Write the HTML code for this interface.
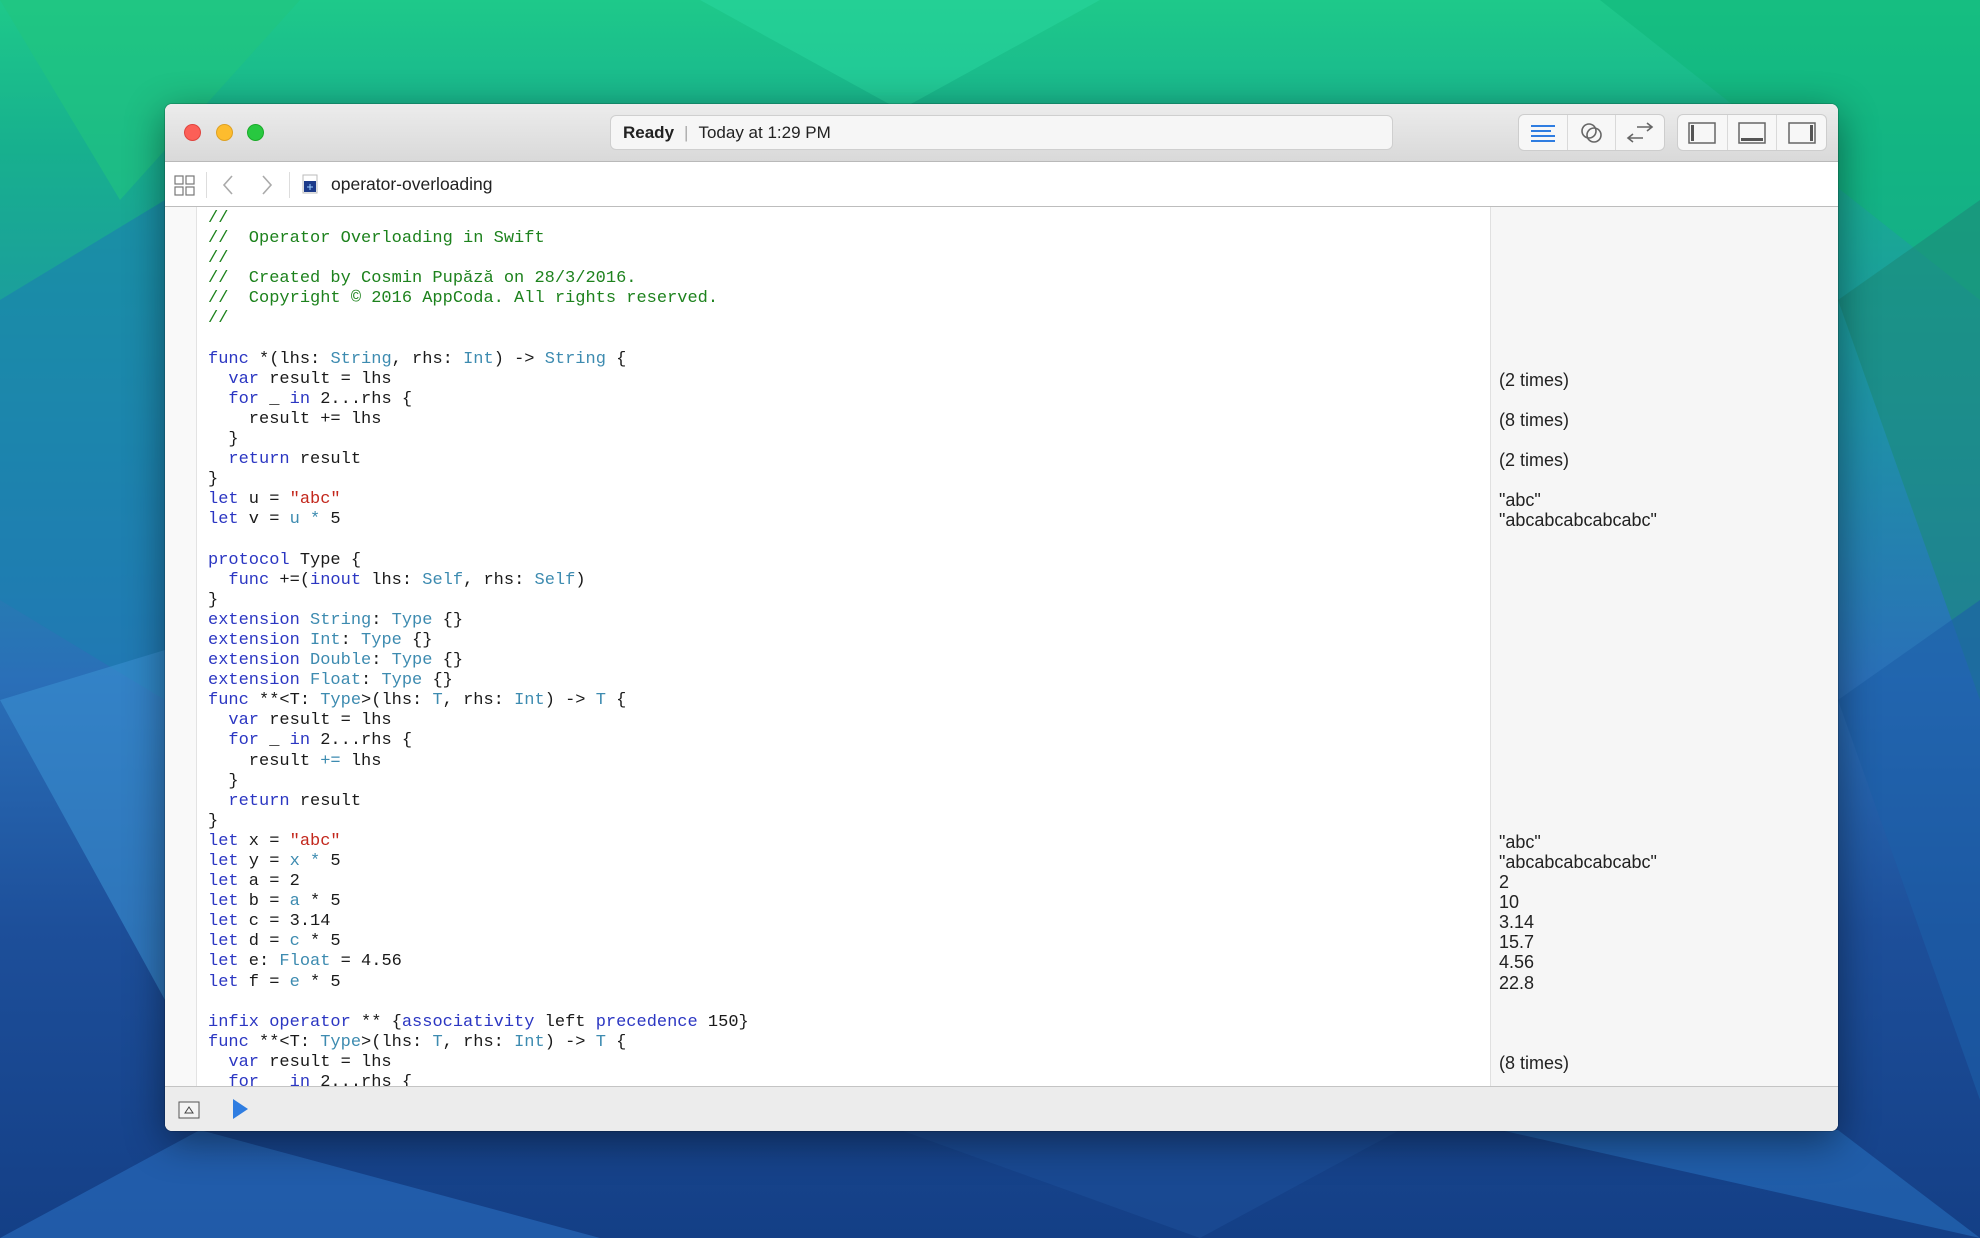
<!DOCTYPE html>
<html><head><meta charset="utf-8"><style>
*{margin:0;padding:0;box-sizing:border-box}
body{width:1980px;height:1238px;overflow:hidden;position:relative;font-family:"Liberation Sans",sans-serif;background:linear-gradient(180deg,#1ec98a 0%,#17b08e 12%,#1f8fa8 35%,#2a6fb8 55%,#1d4f9a 75%,#143f86 100%)}
.bg{position:absolute;left:0;top:0}
.win{position:absolute;left:165px;top:104px;width:1673px;height:1027px;border-radius:7px;overflow:hidden;background:#fff;box-shadow:0 10px 40px rgba(0,0,0,.45),0 0 0 1px rgba(0,0,0,.15)}
.title{position:absolute;left:0;top:0;width:100%;height:58px;background:linear-gradient(#ececec,#d9d9d9);border-bottom:1px solid #b9b9b9}
.dot{position:absolute;top:20px;width:17px;height:17px;border-radius:50%}
.status{position:absolute;left:446px;top:12px;width:781px;height:33px;background:#f6f6f6;border-radius:5px;box-shadow:0 0 0 1px #cfcfcf;font-size:17px;line-height:33px;color:#222}
.grp{position:absolute;top:11px;height:35px;background:#f7f7f7;border-radius:5px;box-shadow:0 0 0 1px #cdcdcd;display:flex}
.grp div{flex:1;border-right:1px solid #d9d9d9;display:flex;align-items:center;justify-content:center}
.grp div:last-child{border-right:none}
.nav{position:absolute;left:0;top:58px;width:100%;height:45px;background:#fff;border-bottom:1px solid #bdbdbd}
.code{position:absolute;left:0;top:103px;width:100%;height:879px;overflow:hidden;background:#fff}
.gut{position:absolute;left:0;top:0;width:32px;height:100%;background:#f9f9f9;border-right:1px solid #e3e3e3}
.res{position:absolute;left:1325px;top:0;right:0;height:100%;background:#f6f6f6;border-left:1px solid #e0e0e0}
pre{position:absolute;left:43px;top:2px;font-family:"Liberation Mono",monospace;font-size:17px;line-height:20.1px;color:#1a1a1a}
.r{position:absolute;left:1334px;top:2px;font-size:18px;line-height:20.1px;color:#222;white-space:pre}
.c{color:#1d821d}.k{color:#2b36c2}.t{color:#3d8bb0}.s{color:#c3281d}
.bot{position:absolute;left:0;top:982px;width:100%;height:45px;background:#ececec;border-top:1px solid #c4c4c4}
</style></head><body>
<svg class="bg" width="1980" height="1238">
<polygon points="0,0 300,0 120,200" fill="#22c47e" opacity=".6"/>
<polygon points="700,0 1100,0 900,110" fill="#2ad8a0" opacity=".5"/>
<polygon points="1600,0 1980,0 1980,300" fill="#10b87c" opacity=".6"/>
<polygon points="0,300 165,200 165,700 0,600" fill="#1a7fb0" opacity=".6"/>
<polygon points="0,700 165,650 165,1000" fill="#3a8fd0" opacity=".6"/>
<polygon points="1838,300 1980,200 1980,700" fill="#1a8a7a" opacity=".6"/>
<polygon points="1838,700 1980,600 1980,1100" fill="#1d5fa8" opacity=".6"/>
<polygon points="200,1130 600,1238 0,1238" fill="#2a6ec0" opacity=".6"/>
<polygon points="900,1130 1400,1130 1200,1238" fill="#1c4f98" opacity=".6"/>
<polygon points="1500,1130 1980,1238 1838,1130" fill="#2a78c8" opacity=".5"/>
</svg>
<div class="win">
 <div class="title">
  <div class="dot" style="left:19px;background:#fc5f57;border:1px solid #e0443e"></div>
  <div class="dot" style="left:51px;background:#fdbc2e;border:1px solid #dea123"></div>
  <div class="dot" style="left:82px;background:#28c840;border:1px solid #1aab29"></div>
  <div class="status"><b style="margin-left:12px">Ready</b><span style="color:#aaa;margin:0 10px">|</span>Today at 1:29 PM</div>
  <div class="grp" style="left:1354px;width:145px">
   <div><svg width="28" height="20"><g stroke="#2f7de1" stroke-width="2"><line x1="2" y1="3" x2="26" y2="3"/><line x1="2" y1="8" x2="22" y2="8"/><line x1="2" y1="13" x2="26" y2="13"/><line x1="2" y1="18" x2="26" y2="18"/></g></svg></div>
   <div><svg width="26" height="24"><g fill="none" stroke="#666" stroke-width="1.6"><circle cx="10" cy="10" r="7"/><circle cx="15" cy="14" r="7"/></g></svg></div>
   <div><svg width="30" height="24"><g fill="none" stroke="#666" stroke-width="1.6"><path d="M12 6H27M22 2l5 4-5 4"/><path d="M3 17H18M8 13l-5 4 5 4"/></g></svg></div>
  </div>
  <div class="grp" style="left:1513px;width:148px">
   <div><svg width="28" height="22"><rect x="1" y="1" width="26" height="20" fill="none" stroke="#666" stroke-width="1.5"/><rect x="3" y="3" width="3" height="16" fill="#555"/></svg></div>
   <div><svg width="28" height="22"><rect x="1" y="1" width="26" height="20" fill="none" stroke="#666" stroke-width="1.5"/><rect x="3" y="16" width="22" height="3" fill="#555"/></svg></div>
   <div><svg width="28" height="22"><rect x="1" y="1" width="26" height="20" fill="none" stroke="#666" stroke-width="1.5"/><rect x="22" y="3" width="3" height="16" fill="#555"/></svg></div>
  </div>
 </div>
 <div class="nav">
  <svg style="position:absolute;left:9px;top:13px" width="22" height="22"><g fill="none" stroke="#777" stroke-width="1.2"><rect x="1" y="1" width="8" height="8"/><rect x="12" y="1" width="8" height="8"/><rect x="1" y="12" width="8" height="8"/><rect x="12" y="12" width="8" height="8"/></g></svg>
  <div style="position:absolute;left:41px;top:10px;width:1px;height:26px;background:#ddd"></div>
  <svg style="position:absolute;left:56px;top:12px" width="14" height="22"><path d="M11 2L3 11l8 9" fill="none" stroke="#aaa" stroke-width="1.6"/></svg>
  <svg style="position:absolute;left:95px;top:12px" width="14" height="22"><path d="M3 2l8 9-8 9" fill="none" stroke="#aaa" stroke-width="1.6"/></svg>
  <div style="position:absolute;left:124px;top:10px;width:1px;height:26px;background:#ddd"></div>
  <svg style="position:absolute;left:137px;top:12px" width="16" height="20"><rect x="1" y="1" width="14" height="18" fill="#fff" stroke="#bbb"/><rect x="2" y="7" width="12" height="11" fill="#1c3a8a"/><path d="M5 13h6M8 10v6" stroke="#9cf" stroke-width="1"/></svg>
  <div style="position:absolute;left:166px;top:12px;font-size:17.5px;color:#222">operator-overloading</div>
 </div>
 <div class="code">
  <div class="gut"></div>
  <div class="res"></div>
<pre><span class="c">//
//  Operator Overloading in Swift
//
//  Created by Cosmin Pupăză on 28/3/2016.
//  Copyright © 2016 AppCoda. All rights reserved.
//</span>

<span class="k">func</span> *(lhs: <span class="t">String</span>, rhs: <span class="t">Int</span>) -&gt; <span class="t">String</span> {
  <span class="k">var</span> result = lhs
  <span class="k">for</span> _ <span class="k">in</span> 2...rhs {
    result += lhs
  }
  <span class="k">return</span> result
}
<span class="k">let</span> u = <span class="s">"abc"</span>
<span class="k">let</span> v = <span class="t">u *</span> 5

<span class="k">protocol</span> Type {
  <span class="k">func</span> +=(<span class="k">inout</span> lhs: <span class="t">Self</span>, rhs: <span class="t">Self</span>)
}
<span class="k">extension</span> <span class="t">String</span>: <span class="t">Type</span> {}
<span class="k">extension</span> <span class="t">Int</span>: <span class="t">Type</span> {}
<span class="k">extension</span> <span class="t">Double</span>: <span class="t">Type</span> {}
<span class="k">extension</span> <span class="t">Float</span>: <span class="t">Type</span> {}
<span class="k">func</span> **&lt;T: <span class="t">Type</span>&gt;(lhs: <span class="t">T</span>, rhs: <span class="t">Int</span>) -&gt; <span class="t">T</span> {
  <span class="k">var</span> result = lhs
  <span class="k">for</span> _ <span class="k">in</span> 2...rhs {
    result <span class="t">+=</span> lhs
  }
  <span class="k">return</span> result
}
<span class="k">let</span> x = <span class="s">"abc"</span>
<span class="k">let</span> y = <span class="t">x *</span> 5
<span class="k">let</span> a = 2
<span class="k">let</span> b = <span class="t">a</span> * 5
<span class="k">let</span> c = 3.14
<span class="k">let</span> d = <span class="t">c</span> * 5
<span class="k">let</span> e: <span class="t">Float</span> = 4.56
<span class="k">let</span> f = <span class="t">e</span> * 5

<span class="k">infix operator</span> ** {<span class="k">associativity</span> left <span class="k">precedence</span> 150}
<span class="k">func</span> **&lt;T: <span class="t">Type</span>&gt;(lhs: <span class="t">T</span>, rhs: <span class="t">Int</span>) -&gt; <span class="t">T</span> {
  <span class="k">var</span> result = lhs
  <span class="k">for</span> _ <span class="k">in</span> 2...rhs {
</pre>
<div class="r">







(2 times)

(8 times)

(2 times)

"abc"
"abcabcabcabcabc"















"abc"
"abcabcabcabcabc"
2
10
3.14
15.7
4.56
22.8



(8 times)
</div>
 </div>
 <div class="bot">
  <svg style="position:absolute;left:13px;top:14px" width="22" height="18"><rect x="1" y="1" width="20" height="16" fill="#f4f4f4" stroke="#555"/><path d="M7 12l4-6 4 6z" fill="none" stroke="#444"/></svg>
  <svg style="position:absolute;left:66px;top:11px" width="18" height="22"><path d="M2 1L17 11 2 21z" fill="#2f7de1"/></svg>
 </div>
</div>
</body></html>
